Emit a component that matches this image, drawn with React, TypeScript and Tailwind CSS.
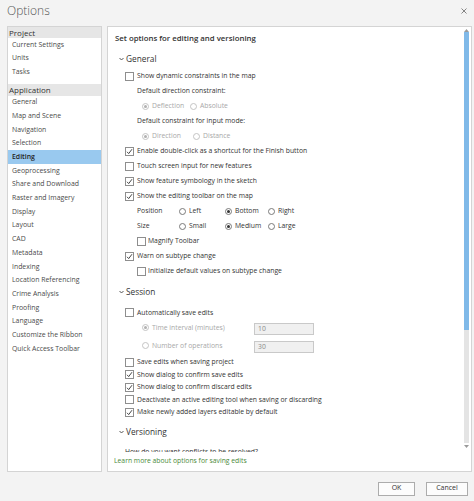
import React from 'react';

const projectItems = ['Current Settings', 'Units', 'Tasks'];
const appItems = [
  'General',
  'Map and Scene',
  'Navigation',
  'Selection',
  'Editing',
  'Geoprocessing',
  'Share and Download',
  'Raster and Imagery',
  'Display',
  'Layout',
  'CAD',
  'Metadata',
  'Indexing',
  'Location Referencing',
  'Crime Analysis',
  'Proofing',
  'Language',
  'Customize the Ribbon',
  'Quick Access Toolbar',
];

function CheckBox({ checked }: { checked?: boolean }) {
  return (
    <span className="w-[9px] h-[9px] border border-[#8e8e8e] bg-white flex items-center justify-center shrink-0">
      {checked && (
        <svg width="7" height="7" viewBox="0 0 7 7">
          <polyline points="1,3.8 2.7,5.6 6,1.2" fill="none" stroke="#333" strokeWidth="0.9" />
        </svg>
      )}
    </span>
  );
}

function Radio({ checked, disabled }: { checked?: boolean; disabled?: boolean }) {
  return (
    <span
      className={`w-[7px] h-[7px] rounded-full border bg-white flex items-center justify-center shrink-0 ${
        disabled ? 'border-[#c4c4c4]' : 'border-[#7a7a7a]'
      }`}
    >
      {checked && (
        <span className={`w-[3px] h-[3px] rounded-full ${disabled ? 'bg-[#b0b0b0]' : 'bg-[#333]'}`} />
      )}
    </span>
  );
}

function Chevron() {
  return (
    <svg width="5" height="4" viewBox="0 0 5 4" className="shrink-0">
      <polyline points="0.5,1 2.5,3 4.5,1" fill="none" stroke="#444" strokeWidth="0.9" />
    </svg>
  );
}

function Section({ label, className }: { label: string; className: string }) {
  return (
    <div className={`flex items-center gap-[2px] ml-[4px] text-[8.3px] text-[#333] ${className}`}>
      <Chevron />
      <span>{label}</span>
    </div>
  );
}

function CheckRow({
  label,
  checked,
  className,
  nested,
}: {
  label: string;
  checked?: boolean;
  className: string;
  nested?: boolean;
}) {
  return (
    <div className={`flex items-center ${nested ? 'ml-[22px] gap-[2px]' : 'ml-[10px] gap-[3px]'} ${className}`}>
      <CheckBox checked={checked} />
      <span>{label}</span>
    </div>
  );
}

function RadioOpt({ label, checked, disabled, className }: { label: string; checked?: boolean; disabled?: boolean; className?: string }) {
  return (
    <div className={`flex items-center gap-[3px] ${disabled ? 'text-[#a8a8a8]' : ''} ${className ?? ''}`}>
      <Radio checked={checked} disabled={disabled} />
      <span>{label}</span>
    </div>
  );
}

function Scrollbar() {
  return (
    <div className="w-[10px] flex flex-col items-center shrink-0">
      <div className="h-[5px] flex items-end justify-center">
        <svg width="5" height="3" viewBox="0 0 5 3">
          <polygon points="2.5,0 5,3 0,3" fill="#9a9a9a" />
        </svg>
      </div>
      <div className="w-[5px] h-[298px] bg-[#80b9e8]" />
      <div className="w-[5px] flex-1 bg-[#e4e4e4]" />
      <div className="h-[9px] flex items-start justify-center pt-[2px]">
        <svg width="5" height="3" viewBox="0 0 5 3">
          <polygon points="0,0 5,0 2.5,3" fill="#9a9a9a" />
        </svg>
      </div>
    </div>
  );
}

function NavList() {
  return (
    <div className="w-[95px] h-[446px] bg-white border border-[#d4d4d4] text-[6.9px] text-[#4a4a4a] shrink-0">
      <div className="h-[11px] bg-[#e6e6e6] pl-[1px] flex items-center text-[8px] text-[#333]">Project</div>
      {projectItems.map(item => (
        <div key={item} className="h-[13.7px] pl-[4px] flex items-center">{item}</div>
      ))}
      <div className="h-[11.7px] mt-[4.9px] bg-[#e6e6e6] pl-[1px] flex items-center text-[8px] text-[#333]">Application</div>
      {appItems.map(item => (
        <div
          key={item}
          className={`h-[13.7px] pl-[4px] flex items-center ${item === 'Editing' ? 'bg-[#99c9ef] font-semibold text-[#222]' : ''}`}
        >
          {item}
        </div>
      ))}
    </div>
  );
}

function EditingOptions() {
  return (
    <div className="w-[365px] h-[446px] bg-white border border-[#d4d4d4] flex flex-col shrink-0">
      <div className="flex h-[425px]">
        <div className="flex-1 overflow-hidden pl-[7px] text-[6.8px] text-[#333]">
          <div className="h-[23px] flex items-center text-[7.8px] font-semibold text-[#333]">
            Set options for editing and versioning
          </div>

          <Section label="General" className="h-[18.5px]" />
          <CheckRow label="Show dynamic constraints in the map" className="h-[15px]" />
          <div className="h-[15px] flex items-center ml-[22px]">Default direction constraint:</div>
          <div className="h-[15px] flex items-center ml-[27px]">
            <RadioOpt label="Deflection" checked disabled className="w-[48px]" />
            <RadioOpt label="Absolute" disabled />
          </div>
          <div className="h-[15px] flex items-center ml-[22px]">Default constraint for input mode:</div>
          <div className="h-[15px] flex items-center ml-[27px]">
            <RadioOpt label="Direction" checked disabled className="w-[51px]" />
            <RadioOpt label="Distance" disabled />
          </div>
          <CheckRow label="Enable double-click as a shortcut for the Finish button" checked className="h-[15px]" />
          <CheckRow label="Touch screen input for new features" className="h-[15px]" />
          <CheckRow label="Show feature symbology in the sketch" checked className="h-[15px]" />
          <CheckRow label="Show the editing toolbar on the map" checked className="h-[15px]" />
          <div className="h-[15px] flex items-center ml-[22px]">
            <span className="w-[42px]">Position</span>
            <RadioOpt label="Left" className="w-[46px]" />
            <RadioOpt label="Bottom" checked className="w-[43px]" />
            <RadioOpt label="Right" />
          </div>
          <div className="h-[15px] flex items-center ml-[22px]">
            <span className="w-[42px]">Size</span>
            <RadioOpt label="Small" className="w-[46px]" />
            <RadioOpt label="Medium" checked className="w-[43px]" />
            <RadioOpt label="Large" />
          </div>
          <CheckRow label="Magnify Toolbar" nested className="h-[15px]" />
          <CheckRow label="Warn on subtype change" checked className="h-[15px]" />
          <CheckRow label="Initialize default values on subtype change" nested className="h-[15px]" />

          <Section label="Session" className="h-[27px]" />
          <CheckRow label="Automatically save edits" className="h-[14.5px]" />
          <div className="h-[15.5px] flex items-center ml-[27px] text-[#a8a8a8]">
            <RadioOpt label="Time interval (minutes)" checked disabled className="w-[112px]" />
            <div className="w-[60px] h-[12px] mt-[2px] bg-[#f0f0f0] border border-[#c9c9c9] flex items-center pl-[3px] text-[#8a8a8a]">
              10
            </div>
          </div>
          <div className="h-[20.5px] flex items-center ml-[27px] text-[#a8a8a8]">
            <RadioOpt label="Number of operations" disabled className="w-[112px]" />
            <div className="w-[60px] h-[12px] mt-[3px] bg-[#f0f0f0] border border-[#c9c9c9] flex items-center pl-[3px] text-[#8a8a8a]">
              30
            </div>
          </div>
          <CheckRow label="Save edits when saving project" className="h-[12.5px]" />
          <CheckRow label="Show dialog to confirm save edits" checked className="h-[12.5px]" />
          <CheckRow label="Show dialog to confirm discard edits" checked className="h-[12.5px]" />
          <CheckRow label="Deactivate an active editing tool when saving or discarding" className="h-[12.5px]" />
          <CheckRow label="Make newly added layers editable by default" checked className="h-[12.5px]" />

          <Section label="Versioning" className="h-[27px]" />
          <div className="h-[13px] flex items-center ml-[10px]">How do you want conflicts to be resolved?</div>
        </div>
        <Scrollbar />
      </div>
      <div className="flex-1 flex items-center pl-[6px] text-[6.8px] text-[#4a8a3a]">
        Learn more about options for saving edits
      </div>
    </div>
  );
}

export default function App() {
  return (
    <div className="w-[474px] h-[501px] bg-[#f3f3f3] font-['Open_Sans',sans-serif] overflow-hidden">
      <div className="h-[21px] flex items-center justify-between pl-[7px] pr-[7px]">
        <span className="text-[12px] font-light text-[#555] leading-none">Options</span>
        <svg width="6" height="6" viewBox="0 0 6 6">
          <path d="M0.5 0.5 L5.5 5.5 M5.5 0.5 L0.5 5.5" stroke="#777" strokeWidth="0.9" />
        </svg>
      </div>

      <div className="flex gap-[5px] mt-[5px] pl-[7px]">
        <NavList />
        <EditingOptions />
      </div>

      <div className="flex justify-end gap-[11px] pr-[6px] mt-[9.5px]">
        <button className="w-[37px] h-[14px] bg-[#fcfcfc] border border-[#acacac] text-[7px] text-[#333]">OK</button>
        <button className="w-[42px] h-[14px] bg-[#fcfcfc] border border-[#acacac] text-[7px] text-[#333]">Cancel</button>
      </div>
    </div>
  );
}
